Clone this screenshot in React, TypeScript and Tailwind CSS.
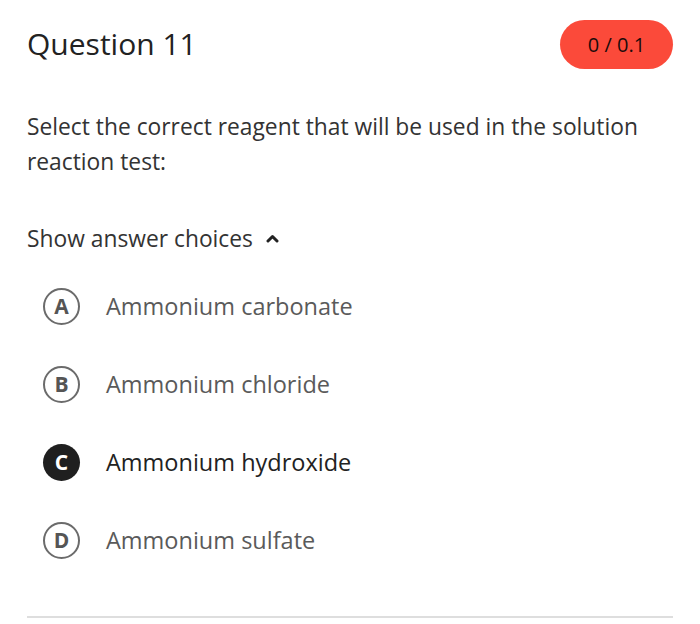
const choices = [
  { key: "A", label: "Ammonium carbonate" },
  { key: "B", label: "Ammonium chloride" },
  { key: "C", label: "Ammonium hydroxide", selected: true },
  { key: "D", label: "Ammonium sulfate" },
];

export default function App() {
  return (
    <div className="w-[700px] h-[624px] bg-white px-[27px] font-['Open_Sans',sans-serif] overflow-hidden">
      {/* Header */}
      <div className="flex items-center justify-between pt-5 h-[69px]">
        <h1 className="text-[30px] leading-none font-medium text-[#222] -mt-[2px]">Question 11</h1>
        <div className="w-[113px] h-[49px] rounded-full bg-[#fb4a3a] flex items-center justify-center text-[20px] font-medium text-[#1c0c0b]">
          0 / 0.1
        </div>
      </div>

      {/* Prompt */}
      <p className="mt-[40px] text-[22.8px] leading-[35px] text-[#333]">
        Select the correct reagent that will be used in the solution reaction test:
      </p>

      {/* Toggle */}
      <button className="mt-[42px] flex items-center gap-[13px] text-[22.8px] leading-[35px] text-[#333]">
        Show answer choices
        <svg width="13" height="9" viewBox="0 0 13 9" fill="none">
          <path d="M2 7 6.5 2.5 11 7" stroke="#222" strokeWidth="3" strokeLinecap="round" strokeLinejoin="round" />
        </svg>
      </button>

      {/* Choices */}
      <div className="mt-[32px] ml-[16px] flex flex-col gap-[41px]">
        {choices.map((c) => (
          <div key={c.key} className="flex items-center gap-[26px]">
            <div
              className={`w-[37px] h-[37px] shrink-0 rounded-full flex items-center justify-center text-[21px] font-bold ${
                c.selected ? "bg-[#1f1f1f] text-white" : "border-[2.5px] border-[#6b6b6b] text-[#555]"
              }`}
            >
              {c.key}
            </div>
            <span className={`text-[23.5px] font-medium ${c.selected ? "text-[#222]" : "text-[#5a5a5a]"}`}>{c.label}</span>
          </div>
        ))}
      </div>

      <div className="mt-[57px] h-[2px] bg-[#dedede]" />
    </div>
  );
}
